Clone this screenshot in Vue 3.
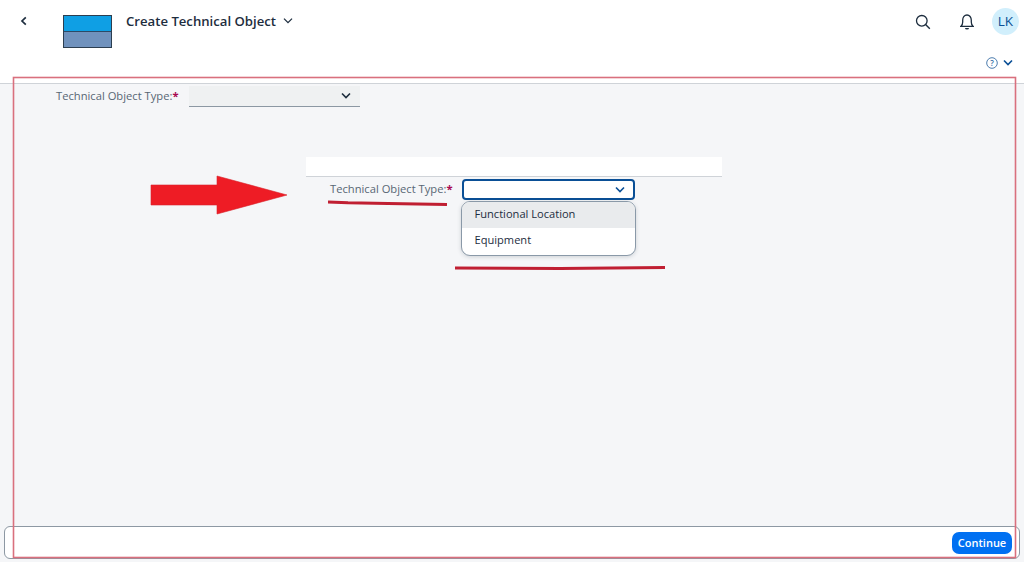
<script setup>
const options = ['Functional Location', 'Equipment']
</script>

<template>
  <div class="page">
    <header class="shell">
      <div class="topbar">
        <button class="back" aria-label="Back">
          <svg width="10" height="10" viewBox="0 0 10 10"><path d="M6.800 1.400 3 5l3.800 3.600" fill="none" stroke="#1d2d3e" stroke-width="1.700"/></svg>
        </button>
        <div class="logo"><i class="logo-top"></i><i class="logo-bottom"></i></div>
        <h1 class="title">Create Technical Object</h1>
        <svg class="title-caret" width="10" height="8" viewBox="0 0 10 8"><path d="M1 1.600 5 5.600l4-4" fill="none" stroke="#1d2d3e" stroke-width="1.300"/></svg>
        <div class="actions">
          <svg width="16" height="16" viewBox="0 0 16 16"><circle cx="6.800" cy="6.800" r="5.300" fill="none" stroke="#1d2d3e" stroke-width="1.300"/><path d="m10.600 10.600 4.200 4.200" stroke="#1d2d3e" stroke-width="1.400"/></svg>
          <svg class="bell" width="14" height="16" viewBox="0 0 14 16"><path d="M1 12.300h12c-1.300-1.200-1.700-2.300-1.700-4.300V6.300C11.300 3.200 9.500 1 7 1S2.700 3.200 2.700 6.300V8c0 2-.4 3.100-1.700 4.300Z" fill="none" stroke="#1d2d3e" stroke-width="1.300"/><path d="M5 14h4a2 1.600 0 0 1-4 0Z" fill="#1d2d3e"/></svg>
          <div class="avatar">LK</div>
        </div>
      </div>
      <div class="help-row">
        <svg width="12" height="12" viewBox="0 0 12 12"><circle cx="6" cy="6" r="5.300" fill="none" stroke="#3a6ea5" stroke-width=".9"/><text x="6" y="8.800" text-anchor="middle" class="help-q">?</text></svg>
        <svg width="10" height="8" viewBox="0 0 10 8"><path d="M1 1.500 5 5.500l4-4" fill="none" stroke="#0a4f96" stroke-width="1.600"/></svg>
      </div>
    </header>

    <main class="content">
      <div class="field top-field">
        <label class="label">Technical Object Type:<span class="req">*</span></label>
        <div class="select readonly">
          <svg width="10" height="8" viewBox="0 0 10 8"><path d="M1 1.500 5 5.500l4-4" fill="none" stroke="#1d2d3e" stroke-width="1.600"/></svg>
        </div>
      </div>

      <section class="panel">
        <div class="panel-head"></div>
        <div class="field panel-field">
          <label class="label">Technical Object Type:<span class="req">*</span></label>
          <div class="combo">
            <div class="select focused">
              <svg width="10" height="8" viewBox="0 0 10 8"><path d="M1 1.500 5 5.500l4-4" fill="none" stroke="#0a4f96" stroke-width="1.600"/></svg>
            </div>
            <ul class="menu">
              <li v-for="(o, i) in options" :key="o" :class="{ active: i === 0 }">{{ o }}</li>
            </ul>
          </div>
        </div>
      </section>
    </main>

    <footer class="footer-wrap">
      <div class="footer">
        <button class="continue">Continue</button>
      </div>
    </footer>

    <svg class="marks" width="1024" height="562" viewBox="0 0 1024 562">
      <rect x="13.500" y="77.500" width="1002" height="480" fill="none" stroke="#d9707e" stroke-width="1.600"/>
      <path d="M151 185H217V176L287 195 217 214V205H151Z" fill="#ee1c25" stroke="#d8232b" stroke-width=".6"/>
      <path d="M328 202 348 202.800 388 203.500 447 204.500" fill="none" stroke="#c01f32" stroke-width="3"/>
      <path d="M455 268 560 268.500 665 267.500" fill="none" stroke="#c01f32" stroke-width="3"/>
    </svg>
  </div>
</template>

<style>
html, body { margin: 0; background: #fff; }
</style>

<style scoped>
.page {
  position: relative;
  width: 1024px;
  height: 562px;
  overflow: hidden;
  background: #fff;
  display: flex;
  flex-direction: column;
  font-family: "Open Sans", "Noto Sans", sans-serif;
  color: #1d2d3e;
}
.shell {
  height: 84px;
  box-sizing: border-box;
  flex: none;
  border-bottom: 1px solid #cfd3d8;
  display: flex;
  flex-direction: column;
}
.topbar {
  height: 54px;
  display: flex;
  align-items: flex-start;
}
.back {
  width: 10px;
  height: 10px;
  padding: 0;
  margin: 16px 0 0 19px;
  border: 0;
  background: none;
  display: flex;
}
.logo {
  width: 47px;
  height: 31px;
  margin: 15px 0 0 34px;
  border: 1px solid #2c3e50;
  display: flex;
  flex-direction: column;
}
.logo-top { flex: 1; background: #0f9fe4; border-bottom: 1px solid #2c4a66; }
.logo-bottom { flex: 1; background: #7092bd; }
.title {
  margin: 12px 0 0 14px;
  font-size: 13.150px;
  line-height: 18px;
  font-weight: 600;
  white-space: nowrap;
}
.title-caret { margin: 17px 0 0 7px; }
.actions {
  margin: 8px 5px 0 auto;
  display: flex;
  align-items: center;
}
.actions svg { flex: none; }
.bell { margin-left: 29px; }
.avatar {
  width: 27px;
  height: 27px;
  margin-left: 18px;
  border-radius: 50%;
  background: #d1effc;
  color: #0a4f96;
  font-size: 13.500px;
  line-height: 27px;
  text-align: center;
}
.help-q { font: 600 8px "Open Sans", sans-serif; fill: #3a6ea5; }
.help-row {
  display: flex;
  align-items: center;
  justify-content: flex-end;
  gap: 5px;
  height: 18px;
  padding: 0 11px 0 0;
}
.content {
  flex: 1;
  min-height: 0;
  background: #f5f6f8;
  display: flex;
  flex-direction: column;
}
.field { display: flex; }
.label {
  font-size: 11.200px;
  line-height: 20px;
  color: #586674;
  white-space: nowrap;
}
.req { color: #aa0a50; font-weight: 700; }
.top-field {
  padding: 2px 0 0 56px;
  gap: 10px;
}
.select {
  box-sizing: border-box;
  display: flex;
  align-items: center;
  justify-content: flex-end;
}
.readonly {
  width: 171px;
  height: 21px;
  background: #eff1f2;
  border-bottom: 1px solid #8c98a3;
  padding-right: 9px;
}
.panel {
  width: 416px;
  margin: 50px 0 0 306px;
}
.panel-head {
  height: 20px;
  box-sizing: border-box;
  background: #fff;
  border-bottom: 1px solid #cfd3d8;
}
.panel-field {
  padding: 2px 0 0 24px;
  gap: 9px;
}
.combo {
  position: relative;
  width: 173px;
}
.focused {
  width: 173px;
  height: 21px;
  background: #fff;
  border: 2px solid #0a4f96;
  border-radius: 4px;
  padding-right: 8px;
}
.menu {
  position: absolute;
  left: -1px;
  top: 22px;
  width: 175px;
  box-sizing: border-box;
  margin: 0;
  padding: 0 0 1px;
  list-style: none;
  background: #fff;
  border: 1px solid #8a99a8;
  border-radius: 9px;
  overflow: hidden;
  box-shadow: 0 1px 4px rgba(29, 45, 62, .18);
}
.menu li {
  height: 26px;
  padding-left: 13px;
  font-size: 11.100px;
  line-height: 23px;
  color: #1d2d3e;
}
.menu li.active { background: #e9ebed; }
.footer-wrap {
  flex: none;
  height: 36px;
  padding: 0 4px 3px;
  box-sizing: border-box;
  background: #f5f6f8;
}
.footer {
  height: 33px;
  box-sizing: border-box;
  background: #fff;
  border: 1px solid #8d98a3;
  border-radius: 6px;
  display: flex;
  align-items: center;
  justify-content: flex-end;
  padding-right: 7px;
}
.continue {
  width: 60px;
  height: 22px;
  padding: 0;
  border: 0;
  border-radius: 7px;
  background: #0070f2;
  color: #fff;
  font: 600 11px/22px "Open Sans", sans-serif;
}
.marks { position: absolute; left: 0; top: 0; pointer-events: none; }
</style>
